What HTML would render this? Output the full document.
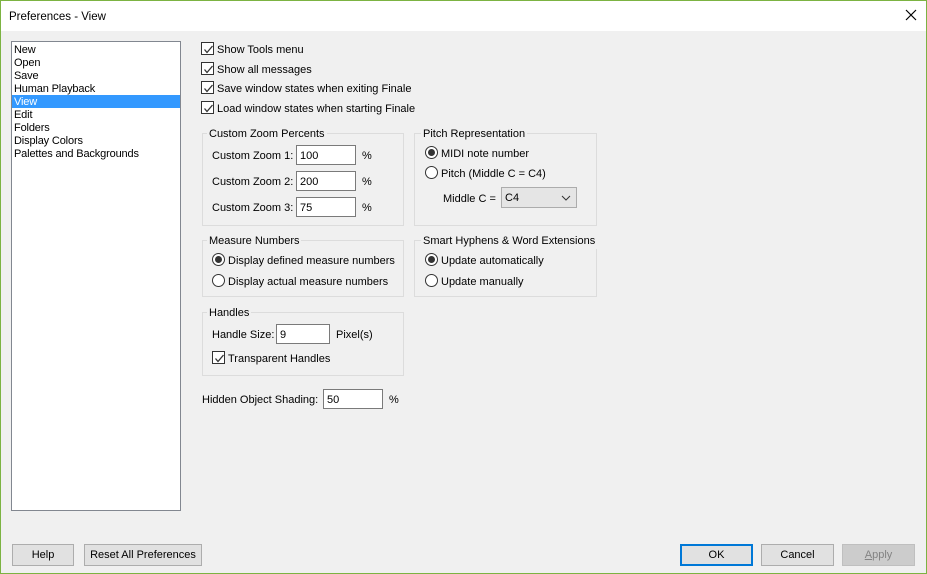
<!DOCTYPE html>
<html><head><style>
*{box-sizing:border-box;margin:0;padding:0}
body{width:927px;height:574px;background:#f0f0f0;font:11px "Liberation Sans",sans-serif;color:#000;position:relative;overflow:hidden}
.win{position:absolute;left:0;top:0;width:927px;height:574px;border:1px solid #7cb342}
.a{position:absolute;white-space:nowrap;line-height:15px;padding-top:2px}
.s{position:absolute}
.title{position:absolute;left:1px;top:1px;width:925px;height:30px;background:#fff}
.list{position:absolute;left:11px;top:41px;width:170px;height:470px;background:#fff;border:1px solid #828790}
.list div{height:13px;line-height:14px;padding-left:2px;letter-spacing:-0.15px}
.sel{background:#3399ff;color:#fff}
.cb{position:absolute;width:13px;height:13px;border:1px solid #333;background:#fff}
.cb svg{position:absolute;left:1px;top:1px}
.rb{position:absolute;width:13px;height:13px;border:1px solid #333;border-radius:50%;background:#fff}
.rb.on::after{content:"";position:absolute;left:2px;top:2px;width:7px;height:7px;border-radius:50%;background:#333}
.grp{position:absolute;border:1px solid #dcdcdc}
.gl{position:absolute;background:#f0f0f0;padding:0 2px;line-height:15px}
.inp{position:absolute;height:20px;border:1px solid #7a7a7a;background:#fff;padding-left:3px;line-height:20px}
.btn{position:absolute;height:22px;border:1px solid #adadad;background:#e1e1e1;text-align:center;line-height:21px}
</style></head><body>
<div class="win"></div>
<div class="title"></div>
<div class="a" style="left:9px;top:8px;font-size:11.5px">Preferences - View</div>
<svg class="s" style="left:905px;top:9px" width="12" height="12"><path d="M1 1L11 11M11 1L1 11" stroke="#000" stroke-width="1.2"/></svg>

<div class="list" style="padding-top:1px">
<div>New</div><div>Open</div><div>Save</div><div>Human Playback</div><div class="sel">View</div><div>Edit</div><div>Folders</div><div>Display Colors</div><div>Palettes and Backgrounds</div>
</div>

<div class="cb" style="left:201px;top:42px"><svg width="11" height="11"><path d="M1.5 5.5L4 8.5L9.5 2" stroke="#333" stroke-width="1.3" fill="none"/></svg></div>
<div class="a" style="left:217px;top:41px">Show Tools menu</div>
<div class="cb" style="left:201px;top:62px"><svg width="11" height="11"><path d="M1.5 5.5L4 8.5L9.5 2" stroke="#333" stroke-width="1.3" fill="none"/></svg></div>
<div class="a" style="left:217px;top:61px">Show all messages</div>
<div class="cb" style="left:201px;top:81px"><svg width="11" height="11"><path d="M1.5 5.5L4 8.5L9.5 2" stroke="#333" stroke-width="1.3" fill="none"/></svg></div>
<div class="a" style="left:217px;top:80px">Save window states when exiting Finale</div>
<div class="cb" style="left:201px;top:101px"><svg width="11" height="11"><path d="M1.5 5.5L4 8.5L9.5 2" stroke="#333" stroke-width="1.3" fill="none"/></svg></div>
<div class="a" style="left:217px;top:100px">Load window states when starting Finale</div>

<div class="grp" style="left:202px;top:133px;width:202px;height:93px"></div>
<div class="gl" style="left:207px;top:127px">Custom Zoom Percents</div>
<div class="a" style="left:212px;top:147px">Custom Zoom 1:</div>
<div class="inp" style="left:296px;top:145px;width:60px">100</div>
<div class="a" style="left:362px;top:147px">%</div>
<div class="a" style="left:212px;top:173px">Custom Zoom 2:</div>
<div class="inp" style="left:296px;top:171px;width:60px">200</div>
<div class="a" style="left:362px;top:173px">%</div>
<div class="a" style="left:212px;top:199px">Custom Zoom 3:</div>
<div class="inp" style="left:296px;top:197px;width:60px">75</div>
<div class="a" style="left:362px;top:199px">%</div>

<div class="grp" style="left:414px;top:133px;width:183px;height:93px"></div>
<div class="gl" style="left:421px;top:127px">Pitch Representation</div>
<div class="rb on" style="left:425px;top:146px"></div>
<div class="a" style="left:441px;top:145px">MIDI note number</div>
<div class="rb" style="left:425px;top:166px"></div>
<div class="a" style="left:441px;top:165px">Pitch (Middle C = C4)</div>
<div class="a" style="left:443px;top:190px">Middle C =</div>
<div class="inp" style="left:501px;top:187px;width:76px;height:21px;background:#e5e5e5;border-color:#acacac;padding-left:3px">C4</div>
<svg class="s" style="left:561px;top:195px" width="10" height="6"><path d="M1 1L5 5L9 1" stroke="#333" fill="none"/></svg>

<div class="grp" style="left:202px;top:240px;width:202px;height:57px"></div>
<div class="gl" style="left:207px;top:234px">Measure Numbers</div>
<div class="rb on" style="left:212px;top:253px"></div>
<div class="a" style="left:228px;top:252px">Display defined measure numbers</div>
<div class="rb" style="left:212px;top:274px"></div>
<div class="a" style="left:228px;top:273px">Display actual measure numbers</div>

<div class="grp" style="left:414px;top:240px;width:183px;height:57px"></div>
<div class="gl" style="left:421px;top:234px">Smart Hyphens &amp; Word Extensions</div>
<div class="rb on" style="left:425px;top:253px"></div>
<div class="a" style="left:441px;top:252px">Update automatically</div>
<div class="rb" style="left:425px;top:274px"></div>
<div class="a" style="left:441px;top:273px">Update manually</div>

<div class="grp" style="left:202px;top:312px;width:202px;height:64px"></div>
<div class="gl" style="left:207px;top:306px">Handles</div>
<div class="a" style="left:212px;top:326px">Handle Size:</div>
<div class="inp" style="left:276px;top:324px;width:54px">9</div>
<div class="a" style="left:336px;top:326px">Pixel(s)</div>
<div class="cb" style="left:212px;top:351px"><svg width="11" height="11"><path d="M1.5 5.5L4 8.5L9.5 2" stroke="#333" stroke-width="1.3" fill="none"/></svg></div>
<div class="a" style="left:228px;top:350px">Transparent Handles</div>

<div class="a" style="left:202px;top:391px">Hidden Object Shading:</div>
<div class="inp" style="left:323px;top:389px;width:60px">50</div>
<div class="a" style="left:389px;top:391px">%</div>

<div class="btn" style="left:12px;top:544px;width:62px">Help</div>
<div class="btn" style="left:84px;top:544px;width:118px">Reset All Preferences</div>
<div class="btn" style="left:680px;top:544px;width:73px;border:2px solid #0078d7;line-height:19px">OK</div>
<div class="btn" style="left:761px;top:544px;width:73px">Cancel</div>
<div class="btn" style="left:842px;top:544px;width:73px;background:#cccccc;border-color:#bfbfbf;color:#838383"><u>A</u>pply</div>
</body></html>
